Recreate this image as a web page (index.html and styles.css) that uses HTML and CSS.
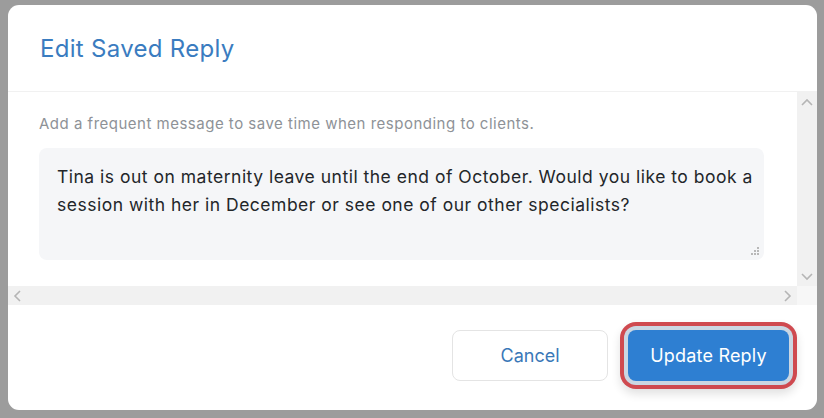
FILE: index.html
```html
<!DOCTYPE html>
<html lang="en">
<head>
<meta charset="utf-8">
<title>Edit Saved Reply</title>
<link rel="stylesheet" href="styles.css">
</head>
<body>
<div class="backdrop">
  <div class="modal">
    <header class="modal-header">
      <h1 class="modal-title">Edit Saved Reply</h1>
    </header>
    <div class="scroll-region">
      <div class="scroll-content">
        <p class="helper">Add a frequent message to save time when responding to clients.</p>
        <div class="textarea">
          <p class="textarea-text">Tina is out on maternity leave until the end of October. Would you like to book a session with her in December or see one of our other specialists?</p>
          <svg class="resize" width="10" height="10" viewBox="0 0 10 10">
            <rect x="7" y="1" width="2" height="2" fill="#b8b8b8"/>
            <rect x="4" y="4" width="2" height="2" fill="#b8b8b8"/>
            <rect x="7" y="4" width="2" height="2" fill="#b8b8b8"/>
            <rect x="1" y="7" width="2" height="2" fill="#b8b8b8"/>
            <rect x="4" y="7" width="2" height="2" fill="#b8b8b8"/>
            <rect x="7" y="7" width="2" height="2" fill="#b8b8b8"/>
          </svg>
        </div>
      </div>
      <div class="vbar">
        <svg width="12" height="8" viewBox="0 0 12 8"><path d="M1 7 L6 2 L11 7" fill="none" stroke="#b5b5b5" stroke-width="1.6"/></svg>
        <svg width="12" height="8" viewBox="0 0 12 8"><path d="M1 1 L6 6 L11 1" fill="none" stroke="#b5b5b5" stroke-width="1.6"/></svg>
      </div>
      <div class="hbar">
        <svg width="8" height="12" viewBox="0 0 8 12"><path d="M7 1 L2 6 L7 11" fill="none" stroke="#b5b5b5" stroke-width="1.6"/></svg>
        <svg width="8" height="12" viewBox="0 0 8 12"><path d="M1 1 L6 6 L1 11" fill="none" stroke="#b5b5b5" stroke-width="1.6"/></svg>
      </div>
      <div class="corner"></div>
    </div>
    <footer class="modal-footer">
      <button class="btn btn-secondary">Cancel</button>
      <button class="btn btn-primary">Update Reply</button>
    </footer>
  </div>
</div>
</body>
</html>
```

FILE: styles.css
```css
* { box-sizing: border-box; }
html, body { margin: 0; padding: 0; }
body {
  width: 824px;
  height: 418px;
  background: #9c9c9c;
  font-family: Inter, "Liberation Sans", sans-serif;
  overflow: hidden;
}
.backdrop {
  padding: 5px 7px 8px 8px;
  height: 418px;
}
.modal {
  width: 809px;
  height: 405px;
  background: #ffffff;
  border-radius: 11px;
  display: flex;
  flex-direction: column;
  overflow: hidden;
}
.modal-header {
  height: 87px;
  border-bottom: 1px solid #f1f1f1;
  padding: 29px 32px 0 32px;
}
.modal-title {
  margin: 0;
  font-size: 24px;
  font-weight: 400;
  color: #3a7cc0;
  letter-spacing: 0.3px;
}
.scroll-region {
  height: 213px;
  display: grid;
  grid-template-columns: 1fr 20px;
  grid-template-rows: 1fr 19px;
}
.scroll-content {
  padding: 22px 33px 0 31px;
}
.helper {
  margin: 0;
  font-size: 15px;
  line-height: 20px;
  color: #8e9297;
  letter-spacing: 0.5px;
}
.textarea {
  margin-top: 14px;
  height: 112px;
  background: #f5f6f8;
  border-radius: 8px;
  padding: 15px 6px 15px 18px;
  position: relative;
}
.textarea-text {
  margin: 0;
  font-size: 17.5px;
  line-height: 28px;
  color: #23262a;
  letter-spacing: 0.5px;
}
.resize {
  position: absolute;
  right: 4px;
  bottom: 4px;
}
.vbar {
  background: #f1f1f1;
  display: flex;
  flex-direction: column;
  justify-content: space-between;
  align-items: center;
  padding: 6px 0 5px;
}
.hbar {
  background: #f1f1f1;
  display: flex;
  justify-content: space-between;
  align-items: center;
  padding: 0 5px 0 5px;
}
.corner { background: #f7f7f7; }
.modal-footer {
  flex: 1;
  display: flex;
  justify-content: flex-end;
  align-items: flex-start;
  gap: 20px;
  padding: 25px 28px 0 0;
}
.btn {
  height: 51px;
  border-radius: 8px;
  font-family: Inter, "Liberation Sans", sans-serif;
  font-size: 18px;
  font-weight: 400;
  cursor: pointer;
}
.btn-secondary {
  width: 156px;
  background: #ffffff;
  border: 1px solid #e4e4e4;
  color: #3a78b8;
}
.btn-primary {
  width: 161px;
  background: #2e7fd2;
  border: none;
  color: #ffffff;
  letter-spacing: 0.2px;
  box-shadow: 0 0 0 4px #cbd7e3, 0 0 0 8px #cf4a50, 0 5px 10px 8px rgba(0, 0, 0, 0.12);
}
```
